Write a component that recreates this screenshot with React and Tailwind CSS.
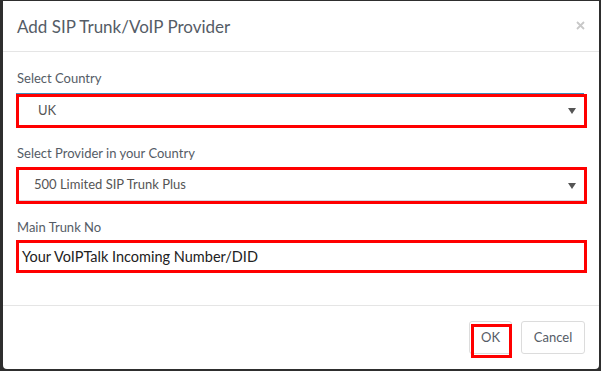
import React from "react";

const Caret = () => (
  <svg width="8" height="6" viewBox="0 0 8 6" className="absolute right-[8px] top-1/2 -translate-y-1/2">
    <path d="M0 0 H8 L4 6 Z" fill="#555" />
  </svg>
);

export default function App() {
  return (
    <div
      className="w-[601px] h-[371px] bg-[#2e2e2e] pl-[3px] pr-[2px] pt-[1px] pb-[2px] overflow-hidden"
      style={{ fontFamily: "Lato, 'Open Sans', sans-serif" }}
    >
      <div className="bg-white h-full rounded-b-[4px] flex flex-col">
        {/* header */}
        <div className="h-[51px] border-b border-[#e5e5e5] flex items-center justify-between pl-[14px] pr-[14px]">
          <h4 className="text-[17px] text-[#555c66] pt-[1px]">Add SIP Trunk/VoIP Provider</h4>
          <svg width="9" height="9" viewBox="0 0 9 9" className="mt-[-1px]">
            <path d="M1 1 L8 8 M8 1 L1 8" stroke="#c8c8c8" strokeWidth="1.8" />
          </svg>
        </div>

        {/* body */}
        <div className="pl-[13px] pr-[11px] pt-[17px] h-[253px]">
          <label className="block text-[13px] text-[#555c66] leading-[18px] pl-[1px]">Select Country</label>
          <div className="mt-[6px] border-t border-[#3c8dbc] w-[568px]">
            <div className="relative h-[34px] border-[3px] border-[#ff0000] w-[571px] flex items-center pl-[19px] text-[13px] text-[#555]">
              UK
              <Caret />
            </div>
          </div>

          <label className="block mt-[16px] text-[13px] text-[#555c66] leading-[18px] pl-[1px]">Select Provider in your Country</label>
          <div className="mt-[5px] relative h-[37px] border-[3px] border-[#ff0000] w-[571px]">
            <div className="h-full border-b border-[#d2d6de] flex items-center pl-[15px] text-[13px] text-[#555]">
              500 Limited SIP Trunk Plus
            </div>
            <Caret />
          </div>

          <label className="block mt-[14px] text-[13px] text-[#555c66] leading-[18px] pl-[1px]">Main Trunk No</label>
          <div className="mt-[4px] h-[33px] border-[3px] border-[#ff0000] w-[571px] flex items-center pl-[3px] text-[14.5px] text-[#222]">
            Your VoIPTalk Incoming Number/DID
          </div>
        </div>

        {/* footer */}
        <div className="border-t border-[#e5e5e5] flex-1 flex items-start justify-end pt-[15px] pr-[14px] gap-[9px]">
          <div className="relative">
            <button className="w-[43px] h-[33px] border border-[#dcdcdc] rounded-[3px] bg-white text-[13px] text-[#555c66]">
              OK
            </button>
            <div className="absolute left-[2px] top-[3px] w-[41px] h-[34px] border-[3px] border-[#ff0000]" />
          </div>
          <button className="w-[64px] h-[33px] border border-[#dcdcdc] rounded-[3px] bg-white text-[13px] text-[#555c66]">
            Cancel
          </button>
        </div>
      </div>
    </div>
  );
}
